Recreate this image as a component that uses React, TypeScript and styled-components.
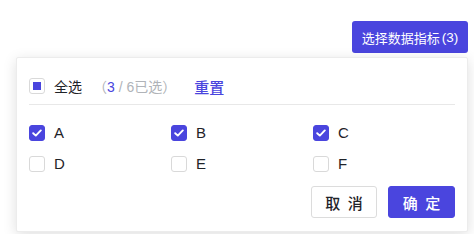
import React, { useState } from "react";
import styled, { createGlobalStyle } from "styled-components";

const Global = createGlobalStyle`
  html, body { margin: 0; padding: 0; background: #ffffff; }
  body { font-family: "Liberation Sans", "Noto Sans CJK SC", sans-serif; color: #1f2329; }
  * { box-sizing: border-box; }
`;

const ACCENT = "#4a45de";

const Page = styled.div`
  width: 474px;
  height: 234px;
  padding: 21px 6px 0 16px;
  display: flex;
  flex-direction: column;
  align-items: flex-end;
  gap: 4px;
  overflow: hidden;
`;

const TriggerButton = styled.button`
  height: 32px;
  width: 116px;
  padding: 0 0 0 0;
  border: none;
  border-radius: 3px;
  background: ${ACCENT};
  color: #ffffff;
  font-family: "Noto Sans CJK SC", "Liberation Sans", sans-serif;
  font-size: 13px;
  display: flex;
  align-items: center;
  justify-content: center;
  cursor: pointer;
`;

const TriggerCount = styled.span`
  margin-left: 2px;
  font-family: "Liberation Sans", sans-serif;
  font-size: 13.5px;
`;

const Panel = styled.div`
  width: 452px;
  border: 1px solid #ececec;
  border-radius: 2px;
  background: #ffffff;
  box-shadow: 0 3px 14px rgba(0, 0, 0, 0.13);
  padding: 12px 12px 13px;
  display: flex;
  flex-direction: column;
`;

const Header = styled.div`
  display: flex;
  align-items: center;
  height: 35px;
  padding-bottom: 2px;
  border-bottom: 1px solid #e8e8e8;
`;

const Box = styled.span<{ $checked?: boolean }>`
  width: 16px;
  height: 16px;
  flex: none;
  border-radius: 3px;
  border: 1px solid ${(p) => (p.$checked ? ACCENT : "#d9d9d9")};
  background: ${(p) => (p.$checked ? ACCENT : "#ffffff")};
  display: flex;
  align-items: center;
  justify-content: center;
`;

const PartialMark = styled.span`
  width: 8px;
  height: 8px;
  background: ${ACCENT};
`;

const CheckLabel = styled.label<{ $size?: number }>`
  display: flex;
  align-items: center;
  gap: 9px;
  font-size: ${(p) => p.$size ?? 14}px;
  color: #1f2329;
  cursor: pointer;
  font-family: "Noto Sans CJK SC", "Liberation Sans", sans-serif;
`;

const Latin = styled.span`
  font-family: "Liberation Sans", "Noto Sans CJK SC", sans-serif;
`;

const Count = styled.span`
  margin-left: 11px;
  font-size: 14px;
  color: #b0b3b8;
  font-family: "Noto Sans CJK SC", "Liberation Sans", sans-serif;
`;

const CountNum = styled.span`
  color: ${ACCENT};
  font-family: "Liberation Sans", sans-serif;
`;

const CountTotal = styled.span`
  font-family: "Liberation Sans", sans-serif;
`;

const ResetLink = styled.a`
  margin-left: 18px;
  font-size: 15px;
  color: ${ACCENT};
  font-weight: 500;
  cursor: pointer;
  font-family: "Noto Sans CJK SC", sans-serif;
`;

const Grid = styled.div`
  display: grid;
  grid-template-columns: repeat(3, 142px);
  grid-auto-rows: 31px;
  margin-top: 12px;
`;

const Cell = styled.div`
  display: flex;
  align-items: center;
`;

const Footer = styled.div`
  display: flex;
  justify-content: flex-end;
  gap: 11px;
  margin-top: 7px;
`;

const FooterButton = styled.button<{ $primary?: boolean }>`
  height: 32px;
  width: ${(p) => (p.$primary ? 67 : 66)}px;
  border-radius: 3px;
  border: 1px solid ${(p) => (p.$primary ? ACCENT : "#dcdcdc")};
  background: ${(p) => (p.$primary ? ACCENT : "#ffffff")};
  color: ${(p) => (p.$primary ? "#ffffff" : "#1f2329")};
  font-family: "Noto Sans CJK SC", sans-serif;
  font-size: 15px;
  font-weight: 500;
  letter-spacing: 2px;
  padding: 0 0 0 2px;
  cursor: pointer;
`;

const Check = () => (
  <svg width="10" height="8" viewBox="0 0 10 8" fill="none">
    <path d="M1.2 4.2 L3.8 6.6 L8.8 1.4" stroke="#fff" strokeWidth="1.9" strokeLinecap="round" strokeLinejoin="round" />
  </svg>
);

const OPTIONS = ["A", "B", "C", "D", "E", "F"];

export default function App() {
  const [selected] = useState<string[]>(["A", "B", "C"]);
  return (
    <>
      <Global />
      <Page>
        <TriggerButton>
          选择数据指标<TriggerCount>({selected.length})</TriggerCount>
        </TriggerButton>
        <Panel>
          <Header>
            <CheckLabel>
              <Box>
                <PartialMark />
              </Box>
              全选
            </CheckLabel>
            <Count>
              （<CountNum>{selected.length}</CountNum>
              <CountTotal> / {OPTIONS.length}</CountTotal>已选）
            </Count>
            <ResetLink>重置</ResetLink>
          </Header>
          <Grid>
            {OPTIONS.map((o) => {
              const on = selected.includes(o);
              return (
                <Cell key={o}>
                  <CheckLabel $size={15}>
                    <Box $checked={on}>{on && <Check />}</Box>
                    <Latin>{o}</Latin>
                  </CheckLabel>
                </Cell>
              );
            })}
          </Grid>
          <Footer>
            <FooterButton>取 消</FooterButton>
            <FooterButton $primary>确 定</FooterButton>
          </Footer>
        </Panel>
      </Page>
    </>
  );
}
